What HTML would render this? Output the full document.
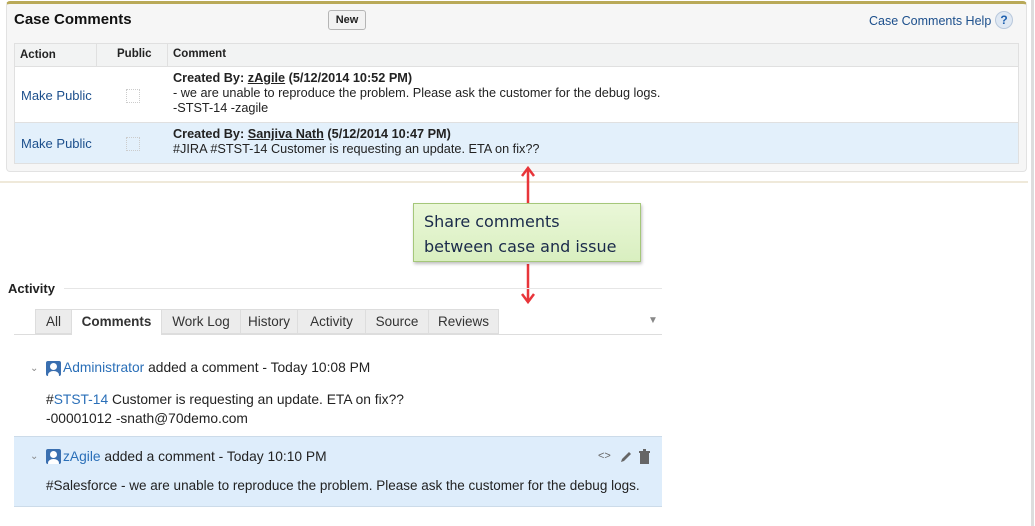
<!DOCTYPE html>
<html><head><style>
body{margin:0;width:1035px;height:526px;background:#fff;font-family:"Liberation Sans",Arial,sans-serif;position:relative;overflow:hidden;font-size:13px;color:#222}
.a{position:absolute}
.lnk{color:#1c4f8c}
.blue{color:#2a6fb8}
.tabs div{box-sizing:border-box;position:absolute;top:0;height:25px;background:#ececec;border:1px solid #ddd;text-align:center;line-height:24px;font-size:13.5px;color:#333}
</style></head><body>
<div class="a" style="left:1031px;top:0;width:3px;height:526px;background:#ddd"></div>
<div class="a" style="left:6px;top:1px;width:1019px;height:167px;background:#f6f6f6;border:1px solid #e2e2e2;border-top:3px solid #b9a958;border-radius:4px"></div>
<div class="a" style="left:14px;top:11px;font-size:15px;font-weight:bold;color:#111">Case Comments</div>
<div class="a" style="left:328px;top:10px;width:36px;height:18px;border:1px solid #b5b5b5;border-radius:3px;background:#f2f2f2;font-size:11px;font-weight:bold;text-align:center;line-height:18px">New</div>
<div class="a lnk" style="left:869px;top:14px;font-size:12.5px">Case Comments Help</div>
<div class="a" style="left:995px;top:11px;width:16px;height:16px;border-radius:50%;background:#dfe8f3;border:1px solid #b8c8dc;color:#1d5fae;font-weight:bold;font-size:12px;text-align:center;line-height:16px">?</div>
<div class="a" style="left:14px;top:43px;width:1003px;height:119px;border:1px solid #e0e0e0;background:#fff"></div>
<div class="a" style="left:15px;top:44px;width:1003px;height:22px;background:#f2f3f3;border-bottom:1px solid #e0e0e0"></div>
<div class="a" style="left:96px;top:44px;width:1px;height:22px;background:#e0e0e0"></div>
<div class="a" style="left:167px;top:44px;width:1px;height:22px;background:#e0e0e0"></div>
<div class="a" style="left:20px;top:49px;font-size:11.5px;font-weight:bold">Action</div>
<div class="a" style="left:117px;top:48px;font-size:11.5px;font-weight:bold">Public</div>
<div class="a" style="left:173px;top:48px;font-size:11.5px;font-weight:bold">Comment</div>
<div class="a" style="left:15px;top:122px;width:1003px;height:40px;background:#e3f0fb;border-top:1px solid #e0e0e0"></div>
<div class="a lnk" style="left:21px;top:88px">Make Public</div>
<div class="a lnk" style="left:21px;top:136px">Make Public</div>
<div class="a" style="left:126px;top:89px;width:12px;height:12px;border:1px dotted #ccc"></div>
<div class="a" style="left:126px;top:137px;width:12px;height:12px;border:1px dotted #ccc"></div>
<div class="a" style="left:173px;top:71px;font-size:12.7px;line-height:15px"><b>Created By: <u>zAgile</u> (5/12/2014 10:52 PM)</b><br>- we are unable to reproduce the problem. Please ask the customer for the debug logs.<br>-STST-14 -zagile</div>
<div class="a" style="left:173px;top:127px;font-size:12.7px;line-height:15px"><b>Created By: <u>Sanjiva Nath</u> (5/12/2014 10:47 PM)</b><br>#JIRA #STST-14 Customer is requesting an update. ETA on fix??</div>
<div class="a" style="left:0;top:181px;width:1028px;height:2px;background:#efe9da"></div>

<svg class="a" style="left:518px;top:164px" width="20" height="142"><g stroke="#e8353a" stroke-width="2.5" fill="none"><line x1="10" y1="4" x2="10" y2="40"/><polyline points="4,12 10,4 16,12"/><line x1="10" y1="100" x2="10" y2="138"/><polyline points="4,130 10,138 16,130"/></g></svg>
<div class="a" style="left:413px;top:203px;width:228px;height:59px;background:linear-gradient(#eaf7d8,#d9efc0);border:1px solid #a5c77a;box-shadow:1px 2px 3px rgba(0,0,0,.25);font-family:'DejaVu Sans',sans-serif;font-size:16px;color:#1a2a4a;line-height:25px;padding:5px 0 0 10px;box-sizing:border-box">Share comments<br>between case and issue</div>

<div class="a" style="left:8px;top:281px;font-weight:bold;font-size:13px">Activity</div>
<div class="a" style="left:64px;top:288px;width:598px;height:1px;background:#e6e6e6"></div>
<div class="a" style="left:14px;top:334px;width:648px;height:1px;background:#ddd"></div>
<div class="a tabs" style="left:0;top:309px;width:520px;height:26px">
<div style="left:35px;width:37px">All</div>
<div style="left:71px;width:91px;background:#fff;border-bottom:0;height:26px;font-weight:bold">Comments</div>
<div style="left:161px;width:80px">Work Log</div>
<div style="left:240px;width:58px">History</div>
<div style="left:297px;width:69px">Activity</div>
<div style="left:365px;width:64px">Source</div>
<div style="left:428px;width:71px">Reviews</div>
</div>
<div class="a" style="left:648px;top:315px;font-size:10px;color:#888">&#9660;</div>

<div class="a" style="left:30px;top:363px;font-size:10px;color:#888">&#8964;</div>
<div class="a" style="left:46px;top:361px;width:15px;height:15px;background:#3a6fb0;border-radius:2px;overflow:hidden"><div style="position:absolute;left:4px;top:2px;width:7px;height:7px;border-radius:50%;background:#fff"></div><div style="position:absolute;left:2px;top:10px;width:11px;height:8px;border-radius:50%;background:#fff"></div></div>
<div class="a" style="left:63px;top:360px;font-size:13.8px"><span class="blue">Administrator</span> added a comment - Today 10:08 PM</div>
<div class="a" style="left:46px;top:390px;font-size:13.8px;line-height:19px">#<span class="blue">STST-14</span> Customer is requesting an update. ETA on fix??<br>-00001012 -snath@70demo.com</div>

<div class="a" style="left:14px;top:436px;width:648px;height:69px;background:#deedfb;border-top:1px solid #ccdbe9;border-bottom:1px solid #ccdbe9"></div>
<div class="a" style="left:30px;top:451px;font-size:10px;color:#888">&#8964;</div>
<div class="a" style="left:46px;top:449px;width:15px;height:15px;background:#3a6fb0;border-radius:2px;overflow:hidden"><div style="position:absolute;left:4px;top:2px;width:7px;height:7px;border-radius:50%;background:#fff"></div><div style="position:absolute;left:2px;top:10px;width:11px;height:8px;border-radius:50%;background:#fff"></div></div>
<div class="a" style="left:63px;top:449px;font-size:13.8px"><span class="blue">zAgile</span> added a comment - Today 10:10 PM</div>
<div class="a" style="left:598px;top:450px;font-size:11px;color:#666">&lt;&gt;</div>
<svg class="a" style="left:619px;top:449px" width="34" height="16"><path d="M2 13 L3 10 L10 3 L12 5 L5 12 Z" fill="#666"/><rect x="21" y="4" width="9" height="11" fill="#666"/><rect x="20" y="2" width="11" height="2" fill="#666"/><rect x="24" y="0" width="3" height="2" fill="#666"/></svg>
<div class="a" style="left:46px;top:478px;font-size:13.5px">#Salesforce - we are unable to reproduce the problem. Please ask the customer for the debug logs.</div>
</body></html>
